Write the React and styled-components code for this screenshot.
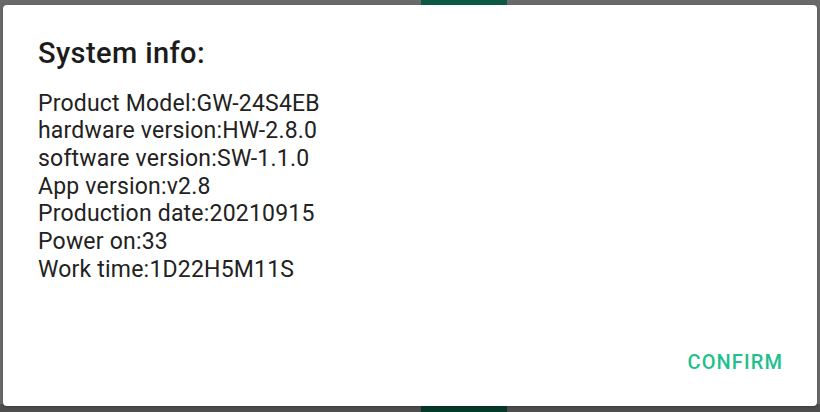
import React from "react";
import styled, { createGlobalStyle } from "styled-components";

const Global = createGlobalStyle`
  html, body { margin: 0; padding: 0; }
  body { width: 820px; height: 412px; overflow: hidden; font-family: Roboto, "Noto Sans", sans-serif; }
`;

const Screen = styled.div`
  position: relative;
  width: 820px;
  height: 412px;
  display: flex;
  flex-direction: column;
  background: #6a6a6a;
`;

const Bar = styled.div`
  height: ${(p) => p.$h}px;
  background: ${(p) => p.$bg};
  display: flex;
  padding-left: 421px;
`;

const Fill = styled.div`
  flex: 1;
`;

const ActiveTab = styled.div`
  width: 86px;
  background: ${(p) => p.$bg};
`;

const Overlay = styled.div`
  position: absolute;
  inset: 0;
  box-sizing: border-box;
  padding: 5px 3px 6px 3px;
  display: flex;
`;

const Dialog = styled.div`
  flex: 1;
  background: #ffffff;
  border-radius: 4px;
  box-shadow: 0 1px 3px rgba(0, 0, 0, 0.25);
  box-sizing: border-box;
  padding: 31px 34px 32px 35px;
  display: flex;
  flex-direction: column;
`;

const Title = styled.h2`
  margin: 0;
  font-family: Roboto, sans-serif;
  font-weight: 500;
  font-size: 29px;
  line-height: 34px;
  letter-spacing: 0.4px;
  color: #1c1c1c;
`;

const InfoList = styled.div`
  margin-top: 19.5px;
  display: flex;
  flex-direction: column;
`;

const InfoLine = styled.div`
  font-family: Roboto, sans-serif;
  font-size: 23px;
  line-height: 27.7px;
  letter-spacing: 0.2px;
  color: #222222;
`;

const Actions = styled.div`
  margin-top: auto;
  display: flex;
  justify-content: flex-end;
`;

const ConfirmButton = styled.button`
  background: none;
  border: none;
  padding: 0;
  font-family: Roboto, sans-serif;
  font-weight: 500;
  font-size: 20px;
  line-height: 24px;
  letter-spacing: 1.1px;
  color: #1fbf8e;
  cursor: pointer;
`;

const info = [
  "Product Model:GW-24S4EB",
  "hardware version:HW-2.8.0",
  "software version:SW-1.1.0",
  "App version:v2.8",
  "Production date:20210915",
  "Power on:33",
  "Work time:1D22H5M11S",
];

export default function App() {
  return (
    <>
      <Global />
      <Screen>
        <Bar $h={8} $bg="#6a6a6a">
          <ActiveTab $bg="#0d5a44" />
        </Bar>
        <Fill />
        <Bar $h={8} $bg="#4e4e4e">
          <ActiveTab $bg="#063b2c" />
        </Bar>
        <Overlay>
          <Dialog>
            <Title>System info:</Title>
            <InfoList>
              {info.map((t) => (
                <InfoLine key={t}>{t}</InfoLine>
              ))}
            </InfoList>
            <Actions>
              <ConfirmButton>CONFIRM</ConfirmButton>
            </Actions>
          </Dialog>
        </Overlay>
      </Screen>
    </>
  );
}
